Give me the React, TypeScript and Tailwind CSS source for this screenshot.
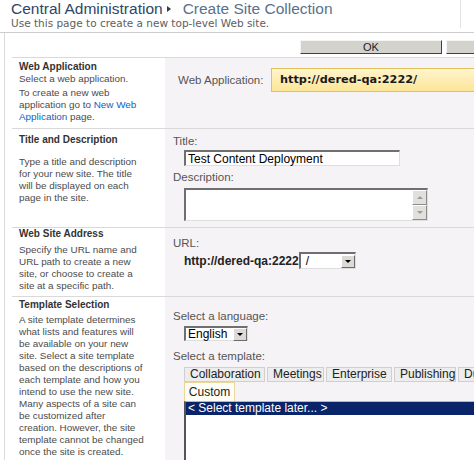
function DropButton() {
  return (
    <span className="flex h-[13px] w-[14px] shrink-0 items-center justify-center border border-t-white border-l-white border-r-[#6b6b6b] border-b-[#6b6b6b] bg-[#dcdad6]">
      <span className="h-0 w-0 border-x-[3px] border-t-[3px] border-x-transparent border-t-black" />
    </span>
  )
}

function ScrollButton({ up }: { up?: boolean }) {
  return (
    <span className="flex h-[16px] w-[15px] items-center justify-center border border-t-white border-l-white border-r-[#8c8c8c] border-b-[#8c8c8c] bg-[#e2e0dd]">
      {up ? (
        <span className="h-0 w-0 border-x-[3px] border-b-[3px] border-x-transparent border-b-[#9c9c9c]" />
      ) : (
        <span className="h-0 w-0 border-x-[3px] border-t-[3px] border-x-transparent border-t-[#9c9c9c]" />
      )}
    </span>
  )
}

export default function App() {
  const tabs = [
    { label: 'Collaboration', w: 'w-[81px]' },
    { label: 'Meetings', w: 'w-[57px]' },
    { label: 'Enterprise', w: 'w-[66px]' },
    { label: 'Publishing', w: 'w-[62px]' },
    { label: 'Duet', w: 'w-[40px]' },
  ]

  return (
    <div className="h-[460px] w-[474px] overflow-hidden bg-white font-['Liberation_Sans',Arial,sans-serif]">
      {/* page title */}
      <div className="flex h-[33px] border-b border-[#cdcdcd]">
        <div className="min-w-0 flex-1 pl-[11px]">
          <h1 className="flex items-center whitespace-nowrap text-[15.5px] leading-[17px]">
            <span className="text-[#2c4766]">Central Administration</span>
            <span className="ml-[4px] mr-[12px] h-0 w-0 border-y-[3.5px] border-l-[4px] border-y-transparent border-l-[#3a3a3a]" />
            <span className="text-[#5a718c]">Create Site Collection</span>
          </h1>
          <p className="whitespace-nowrap font-['DejaVu_Sans',sans-serif] text-[10.5px] leading-[12px] text-[#5e5e5e]">
            Use this page to create a new top-level Web site.
          </p>
        </div>
        <div className="h-[28px] w-[14px] border-l border-[#e3e3e3]" />
      </div>

      <div className="ml-[4px] h-[427px] border-l border-[#dadada]">
        {/* buttons */}
        <div className="flex h-[24px] gap-[4px] pl-[295px] pt-[7px]">
          <button className="h-[14px] w-[142px] shrink-0 border border-t-[#f4f4f4] border-l-[#f4f4f4] border-r-[#404040] border-b-[#404040] bg-[#d4d2cd] text-[11px] leading-[11px] text-[#222]">
            OK
          </button>
          <button className="h-[14px] w-[142px] shrink-0 border border-t-[#f4f4f4] border-l-[#f4f4f4] border-r-[#404040] border-b-[#404040] bg-[#d4d2cd] text-[11px] leading-[11px] text-[#222]">
            Cancel
          </button>
        </div>

        <div className="ml-[7px] flex h-[403px] flex-col">
          {/* Web Application */}
          <div className="flex h-[71px] shrink-0 border-t border-[#d9d9d9]">
            <div className="w-[153px] shrink-0 pl-[7px] pt-[3px]">
              <h2 className="text-[10px] font-bold leading-[12px] text-[#333]">Web Application</h2>
              <div className="w-[126.5px] text-[9.9px] leading-[12px] text-[#4b4b4b]">
                <p>Select a web application.</p>
                <p className="mt-[2px]">
                  To create a new web application go to <a className="text-[#0c62c3]">New Web Application</a> page.
                </p>
              </div>
            </div>
            <div className="flex flex-1 items-start bg-[#f5f3f6] pl-[13px] pt-[10px]">
              <span className="w-[93px] shrink-0 whitespace-nowrap text-[11.5px] leading-[24px] text-[#555]">Web Application:</span>
              <div className="flex h-[24px] flex-1 items-center border border-r-0 border-[#e2c15b] bg-linear-to-b from-[#fff5cc] to-[#fde597] pl-[8px] font-['DejaVu_Sans',sans-serif] text-[11.3px] font-bold whitespace-nowrap text-[#1a1a1a]">
                http://dered-qa:2222/
              </div>
            </div>
          </div>

          {/* Title and Description */}
          <div className="flex h-[99px] shrink-0 border-t border-[#d9d9d9]">
            <div className="w-[153px] shrink-0 pl-[7px] pt-[5px]">
              <h2 className="text-[10px] font-bold leading-[12px] text-[#333]">Title and Description</h2>
              <p className="mt-[10px] w-[126.5px] text-[9.9px] leading-[12px] text-[#4b4b4b]">
                Type a title and description for your new site. The title will be displayed on each page in the site.
              </p>
            </div>
            <div className="flex-1 bg-[#f5f3f6] pl-[8px] pt-[5px] text-[11.5px] leading-[14px] text-[#555]">
              <div>Title:</div>
              <div className="ml-[11px] mt-[2px] flex h-[16px] w-[216px] items-center border-t-2 border-l-2 border-r border-b border-t-[#6f6f6f] border-l-[#6f6f6f] border-r-[#dedede] border-b-[#dedede] bg-white pl-[2px] text-[12px] whitespace-nowrap text-black">
                Test Content Deployment
              </div>
              <div className="mt-[4px]">Description:</div>
              <div className="ml-[11px] mt-[4px] flex h-[33px] w-[244px] border-t-2 border-l-2 border-r border-b border-t-[#6f6f6f] border-l-[#6f6f6f] border-r-[#dedede] border-b-[#dedede] bg-white">
                <div className="flex-1" />
                <div className="flex flex-col">
                  <ScrollButton up />
                  <ScrollButton />
                </div>
              </div>
            </div>
          </div>

          {/* Web Site Address */}
          <div className="flex h-[69px] shrink-0 border-t border-[#d9d9d9]">
            <div className="w-[153px] shrink-0 pl-[7px]">
              <h2 className="text-[10px] font-bold leading-[12px] text-[#333]">Web Site Address</h2>
              <p className="mt-[3.5px] w-[126.5px] text-[9.9px] leading-[12px] text-[#4b4b4b]">
                Specify the URL name and URL path to create a new site, or choose to create a site at a specific path.
              </p>
            </div>
            <div className="flex-1 bg-[#f5f3f6] pl-[8px] pt-[8px] text-[11.5px] leading-[14px] text-[#555]">
              <div>URL:</div>
              <div className="ml-[11px] mt-[2px] flex h-[17px] items-center">
                <span className="whitespace-nowrap text-[12px] font-bold text-[#222]">http://dered-qa:2222</span>
                <div className="flex h-[17px] w-[57px] items-center border-t-2 border-l-2 border-r border-b border-t-[#6f6f6f] border-l-[#6f6f6f] border-r-[#dedede] border-b-[#dedede] bg-white pl-[5px] text-[12px] text-black">
                  <span className="flex-1">/</span>
                  <DropButton />
                </div>
              </div>
            </div>
          </div>

          {/* Template Selection */}
          <div className="flex flex-1 border-t border-[#d9d9d9]">
            <div className="w-[153px] shrink-0 pl-[7px] pt-[2px]">
              <h2 className="text-[10px] font-bold leading-[12px] text-[#333]">Template Selection</h2>
              <p className="mt-[3px] w-[126.5px] text-[9.9px] leading-[12px] text-[#4b4b4b]">
                A site template determines what lists and features will be available on your new site. Select a site template based on the descriptions of each template and how you intend to use the new site. Many aspects of a site can be customized after creation. However, the site template cannot be changed once the site is created.
              </p>
            </div>
            <div className="flex flex-1 flex-col bg-[#f5f3f6] pl-[8px] pt-[12px] text-[11.5px] leading-[14px] text-[#555]">
              <div>Select a language:</div>
              <div className="ml-[11px] mt-[3px] flex h-[15px] w-[64px] items-center border-t-2 border-l-2 border-r border-b border-t-[#6f6f6f] border-l-[#6f6f6f] border-r-[#dedede] border-b-[#dedede] bg-white pl-[2px] text-[12px] text-black">
                <span className="flex-1">English</span>
                <DropButton />
              </div>
              <div className="mt-[8px]">Select a template:</div>
              <div className="ml-[11px] mt-[4px] flex w-[300px] flex-1 flex-col">
                <div className="flex h-[15px] gap-[2px]">
                  {tabs.map((t) => (
                    <div
                      key={t.label}
                      className={`${t.w} shrink-0 overflow-hidden border border-[#cfcfcf] bg-[#ededed] pl-[5px] text-left text-[12px] leading-[13px] whitespace-nowrap text-[#222]`}
                    >
                      {t.label}
                    </div>
                  ))}
                </div>
                <div className="flex h-[19px] w-[51px] items-center justify-center border border-b-0 border-[#ead79a] bg-[#fffef6] text-[12px] text-[#222]">
                  Custom
                </div>
                <div className="flex-1 border-t border-l-2 border-t-[#b8b8b8] border-l-[#555] bg-white">
                  <div className="h-[13px] bg-[#0a246a] pl-[2px] text-[12px] leading-[13px] whitespace-nowrap text-white">
                    &lt; Select template later... &gt;
                  </div>
                </div>
              </div>
            </div>
          </div>
        </div>
      </div>
    </div>
  )
}
